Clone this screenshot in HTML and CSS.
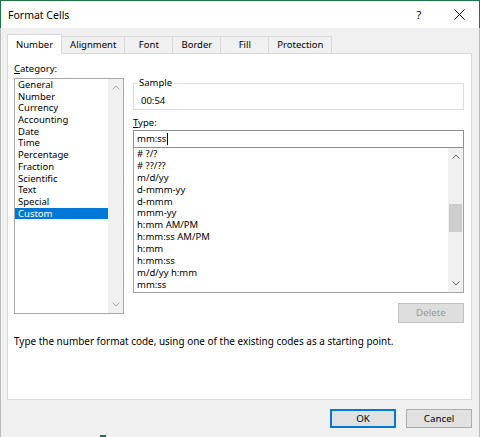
FILE: index.html
```html
<!DOCTYPE html>
<html lang="en">
<head>
<meta charset="utf-8">
<title>Format Cells</title>
<link rel="stylesheet" href="styles.css">
</head>
<body>
<div class="dialog">
  <div class="titlebar">
    <span class="title">Format Cells</span>
    <span class="help">?</span>
    <span class="close"><svg width="11" height="11" viewBox="0 0 11 11"><path d="M0.5 0.5 L10.5 10.5 M10.5 0.5 L0.5 10.5" stroke="#000" stroke-width="1" fill="none"/></svg></span>
  </div>
  <div class="body">
    <div class="tabs">
      <div class="tab active">Number</div>
      <div class="tab">Alignment</div>
      <div class="tab">Font</div>
      <div class="tab">Border</div>
      <div class="tab">Fill</div>
      <div class="tab">Protection</div>
    </div>
    <div class="panel">
      <div class="cat-col">
        <div class="label"><u>C</u>ategory:</div>
        <div class="listbox cat-list">
          <ul class="items">
            <li>General</li>
            <li>Number</li>
            <li>Currency</li>
            <li>Accounting</li>
            <li>Date</li>
            <li>Time</li>
            <li>Percentage</li>
            <li>Fraction</li>
            <li>Scientific</li>
            <li>Text</li>
            <li>Special</li>
            <li class="selected">Custom</li>
          </ul>
          <div class="scrollbar">
            <div class="sb-btn"><svg width="8" height="5" viewBox="0 0 8 5"><path d="M0.5 4.5 L4 1 L7.5 4.5" stroke="#a6a6a6" fill="none"/></svg></div>
            <div class="sb-track"></div>
            <div class="sb-btn"><svg width="8" height="5" viewBox="0 0 8 5"><path d="M0.5 0.5 L4 4 L7.5 0.5" stroke="#a6a6a6" fill="none"/></svg></div>
          </div>
        </div>
      </div>
      <div class="main-col">
        <div class="group">
          <div class="group-label">Sample</div>
          <div class="sample">00:54</div>
        </div>
        <div class="label type-label"><u>T</u>ype:</div>
        <div class="input">mm:ss<span class="caret"></span></div>
        <div class="listbox type-list">
          <ul class="items">
            <li># ?/?</li>
            <li># ??/??</li>
            <li>m/d/yy</li>
            <li>d-mmm-yy</li>
            <li>d-mmm</li>
            <li>mmm-yy</li>
            <li>h:mm AM/PM</li>
            <li>h:mm:ss AM/PM</li>
            <li>h:mm</li>
            <li>h:mm:ss</li>
            <li>m/d/yy h:mm</li>
            <li>mm:ss</li>
          </ul>
          <div class="scrollbar">
            <div class="sb-btn"><svg width="8" height="5" viewBox="0 0 8 5"><path d="M0.5 4.5 L4 1 L7.5 4.5" stroke="#606060" fill="none"/></svg></div>
            <div class="sb-track"><div class="sb-thumb"></div></div>
            <div class="sb-btn"><svg width="8" height="5" viewBox="0 0 8 5"><path d="M0.5 0.5 L4 4 L7.5 0.5" stroke="#606060" fill="none"/></svg></div>
          </div>
        </div>
        <div class="delete-row"><button class="btn disabled">Delete</button></div>
      </div>
      <div class="desc">Type the number format code, using one of the existing codes as a starting point.</div>
    </div>
    <div class="buttons">
      <button class="btn default">OK</button>
      <button class="btn">Cancel</button>
    </div>
  </div>
  <div class="excel-mark"></div>
</div>
</body>
</html>
```

FILE: styles.css
```css
html, body {
  margin: 0;
  padding: 0;
}
body {
  width: 480px;
  height: 437px;
  overflow: hidden;
  font-family: "Noto Sans", "DejaVu Sans", sans-serif;
  font-size: 9.5px;
  color: #000;
}
.dialog {
  position: relative;
  width: 480px;
  height: 437px;
  box-sizing: border-box;
  background: #f0f0f0;
  border-top: 1px solid #217346;
  display: flex;
  flex-direction: column;
}
.titlebar {
  height: 27px;
  flex: none;
  background: #fff;
  border-left: 1px solid #217346;
  border-right: 1px solid #217346;
  display: flex;
  align-items: center;
  padding-left: 7px;
  font-size: 10.5px;
}
.title {
  flex: 1;
}
.help {
  width: 20px;
  margin-right: 10px;
  text-align: center;
  font-size: 11px;
}
.close {
  width: 40px;
  display: flex;
  justify-content: center;
  align-items: center;
}
.close svg {
  display: block;
}
.body {
  flex: 1;
  display: flex;
  flex-direction: column;
  border-left: 1px solid #b3bcb6;
  border-right: 1px solid #b3bcb6;
}
.tabs {
  display: flex;
  align-items: flex-end;
  padding: 6px 0 0 6px;
  height: 19px;
}
.tab {
  box-sizing: border-box;
  height: 17px;
  min-width: 49px;
  padding: 2px 8px 0;
  line-height: 12px;
  text-align: center;
  border: 1px solid #d9d9d9;
  border-bottom: none;
  margin-left: -1px;
  background: #f0f0f0;
}
.tab:first-child {
  margin-left: 0;
}
.tab.active {
  position: relative;
  z-index: 1;
  height: 20px;
  padding-top: 4px;
  margin-bottom: -1px;
  background: #fff;
}
.panel {
  box-sizing: border-box;
  width: 465px;
  height: 347px;
  margin-left: 6px;
  background: #fff;
  border: 1px solid #d9d9d9;
  padding: 9px 7px 0 6px;
  display: grid;
  grid-template-columns: 110px 331px;
  column-gap: 9px;
  align-content: start;
  align-items: start;
}
.label {
  line-height: 12px;
  height: 12px;
}
.label u {
  text-decoration-thickness: 1px;
  text-underline-offset: 1px;
}
.listbox {
  position: relative;
  box-sizing: border-box;
  border: 1px solid #a3a3a3;
  background: #fff;
  display: flex;
}
.items {
  list-style: none;
  margin: 0;
  padding: 0;
  flex: 1;
  overflow: hidden;
}
.cat-list {
  margin-top: 3px;
  height: 236px;
  border-color: #a8a8a8;
}
.cat-list .items li {
  line-height: 11.7px;
  height: 11.7px;
  padding-left: 3px;
  white-space: nowrap;
}
.cat-list .items li.selected {
  background: #0078d7;
  color: #fff;
}
.scrollbar {
  width: 15px;
  flex: none;
  background: #f0f0f0;
  display: flex;
  flex-direction: column;
}
.sb-btn {
  height: 17px;
  flex: none;
  display: flex;
  align-items: center;
  justify-content: center;
}
.sb-btn svg {
  display: block;
}
.sb-track {
  flex: 1;
}
.sb-thumb {
  margin: 39px 1px 0 1px;
  height: 28px;
  background: #cdcdcd;
}
.main-col {
  display: flex;
  flex-direction: column;
}
.group {
  position: relative;
  margin-top: 20px;
  height: 27px;
  box-sizing: border-box;
  border: 1px solid #dcdcdc;
  padding: 11px 0 0 7px;
}
.group-label {
  position: absolute;
  top: -7px;
  left: 3px;
  padding: 0 2px;
  background: #fff;
  line-height: 12px;
}
.sample {
  line-height: 12px;
}
.type-label {
  margin-top: 7px;
}
.input {
  margin-top: 1px;
  box-sizing: border-box;
  height: 18px;
  border: 1px solid #8f8f8f;
  padding: 2px 0 0 3px;
  line-height: 12px;
  display: flex;
  align-items: flex-start;
}
.caret {
  display: inline-block;
  width: 1px;
  height: 12px;
  background: #000;
  margin-left: 1px;
}
.type-list {
  height: 145px;
  border-top: none;
  border-color: #a3a3a3;
}
.type-list .items {
  padding-top: 0;
}
.type-list .items li {
  line-height: 11.9px;
  height: 11.9px;
  padding-left: 3px;
  white-space: nowrap;
}
.type-list .scrollbar {
  width: 15px;
  margin-top: 0;
}
.delete-row {
  margin-top: 10px;
  display: flex;
  justify-content: flex-end;
}
.btn {
  box-sizing: border-box;
  width: 66px;
  height: 20px;
  padding: 0;
  margin: 0;
  font-family: inherit;
  font-size: 9.8px;
  line-height: 12px;
  color: #000;
  background: #e1e1e1;
  border: 1px solid #adadad;
  border-radius: 0;
}
.btn.disabled {
  color: #9a9a9a;
  background: #dedede;
  border-color: #c3c3c3;
}
.btn.default {
  border: 2px solid #0078d7;
}
.desc {
  grid-column: 1 / span 2;
  margin-top: 12px;
  line-height: 12px;
  font-size: 9.95px;
  white-space: nowrap;
}
.buttons {
  margin-top: 9px;
  display: flex;
  justify-content: flex-end;
  gap: 10px;
  padding-right: 7px;
}
.buttons .btn {
  height: 19px;
}
.excel-mark {
  position: absolute;
  left: 100px;
  top: 434px;
  width: 6px;
  height: 2px;
  background: #217346;
}
```
